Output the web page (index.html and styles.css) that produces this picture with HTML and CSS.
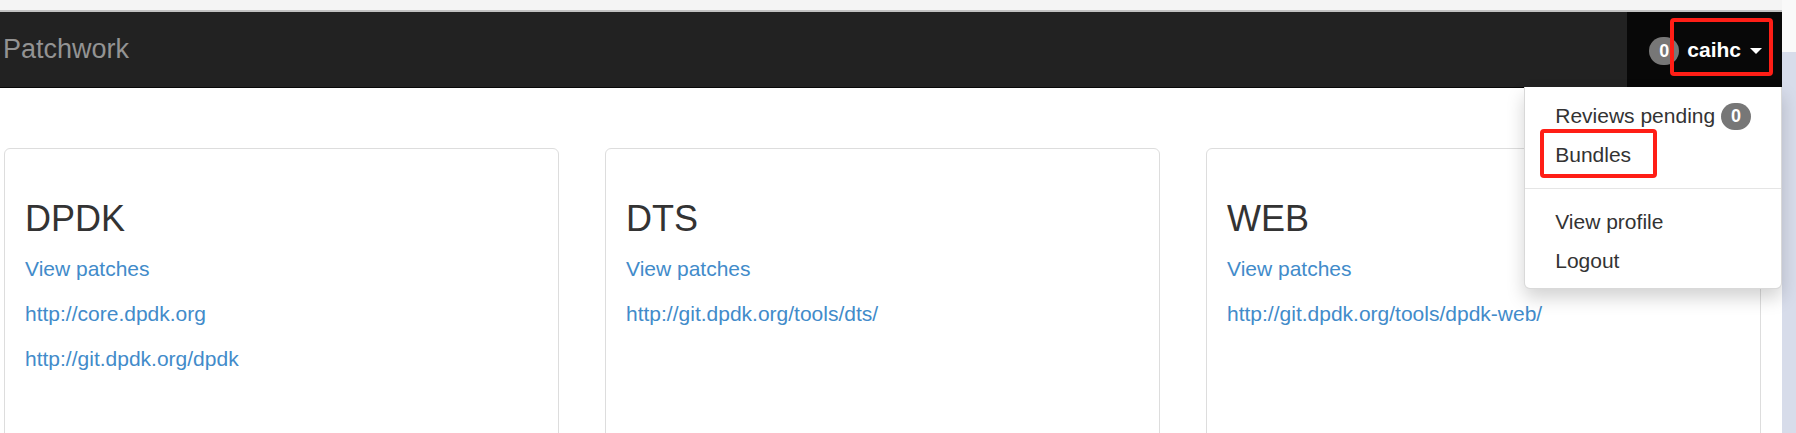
FILE: index.html
```html
<!DOCTYPE html>
<html lang="en">
<head>
    <meta charset="UTF-8">
    <meta name="viewport" content="width=device-width, initial-scale=1.0">
    <title>Patchwork</title>
    <link rel="stylesheet" href="styles.css">
</head>
<body>
    <div class="window">
        <div class="chrome-bar"></div>

        <nav class="navbar">
            <a class="navbar-brand" href="#">Patchwork</a>
            <div class="nav-user">
                <a class="user-toggle" href="#">
                    <span class="badge nav-badge">0</span>
                    <span class="username">caihc</span>
                    <span class="caret"></span>
                </a>
                <span class="highlight highlight-user"></span>

                <ul class="dropdown-menu">
                    <li><a href="#">Reviews pending <span class="badge">0</span></a></li>
                    <li><a href="#">Bundles</a></li>
                    <li class="divider"></li>
                    <li><a href="#">View profile</a></li>
                    <li><a href="#">Logout</a></li>
                    <span class="highlight highlight-bundles"></span>
                </ul>
            </div>
        </nav>

        <div class="projects">
            <div class="project">
                <h3>DPDK</h3>
                <p><a href="#">View patches</a></p>
                <p><a href="#">http://core.dpdk.org</a></p>
                <p><a href="#">http://git.dpdk.org/dpdk</a></p>
            </div>
            <div class="project">
                <h3>DTS</h3>
                <p><a href="#">View patches</a></p>
                <p><a href="#">http://git.dpdk.org/tools/dts/</a></p>
            </div>
            <div class="project">
                <h3>WEB</h3>
                <p><a href="#">View patches</a></p>
                <p><a href="#">http://git.dpdk.org/tools/dpdk-web/</a></p>
            </div>
        </div>
    </div>
    <div class="side-strip"></div>
</body>
</html>
```

FILE: styles.css
```css
* {
    margin: 0;
    padding: 0;
    box-sizing: border-box;
}

body {
    display: flex;
    height: 433px;
    overflow: hidden;
    background: white;
    color: #333;
    font-family: 'Liberation Sans', Arial, sans-serif;
    font-size: 21px;
    line-height: 30px;
}

a {
    color: #428bca;
    text-decoration: none;
}

.window {
    flex: 1;
    min-width: 0;
}

.side-strip {
    width: 14px;
    background: linear-gradient(#f9f9f9 0, #f9f9f9 52px, #d7dcea 52px);
}

.chrome-bar {
    height: 12px;
    background: #f4f4f4;
    border-bottom: 2px solid #c2c2c2;
}

/* Navbar */
.navbar {
    display: flex;
    justify-content: space-between;
    height: 76px;
    background: #222;
    border-bottom: 1px solid #080808;
}

.navbar-brand {
    padding: 22px 0 0 3px;
    color: #939393;
    font-size: 27px;
    line-height: 30px;
}

.nav-user {
    position: relative;
    background: #080808;
}

.user-toggle {
    display: flex;
    align-items: center;
    height: 75px;
    padding: 0 20px 0 22px;
    color: white;
}

.username {
    font-weight: bold;
    margin-left: 8px;
}

.caret {
    width: 0;
    height: 0;
    margin: 3px 0 0 9px;
    border-top: 6px solid white;
    border-left: 6px solid transparent;
    border-right: 6px solid transparent;
}

.badge {
    display: inline-block;
    padding: 4px 10px 5px;
    background: #777;
    color: white;
    font-size: 18px;
    font-weight: bold;
    line-height: 18px;
    border-radius: 14px;
    vertical-align: middle;
}

.nav-badge {
    padding: 5px 10px;
    margin-top: 3px;
}

/* Dropdown */
.dropdown-menu {
    position: absolute;
    top: 75px;
    right: 0;
    min-width: 240px;
    padding: 9px 0 8px;
    list-style: none;
    white-space: nowrap;
    background: white;
    border: 1px solid rgba(0, 0, 0, 0.15);
    border-top: none;
    border-radius: 0 0 6px 6px;
    box-shadow: 0 9px 18px rgba(0, 0, 0, 0.175);
    z-index: 10;
}

.dropdown-menu li a {
    display: block;
    padding: 4.5px 30px;
    color: #333;
}

.dropdown-menu .divider {
    height: 1px;
    margin: 13.5px 0;
    background: #e5e5e5;
}

/* Screenshot markers */
.highlight {
    position: absolute;
    border: 4px solid #ff1e16;
    border-radius: 4px;
    pointer-events: none;
}

.highlight-user {
    left: 43px;
    top: 6px;
    width: 103px;
    height: 58px;
}

.highlight-bundles {
    left: 15px;
    top: 42px;
    width: 117px;
    height: 49px;
}

/* Projects */
.projects {
    display: flex;
    gap: 46px;
    padding: 60px 0 0 4px;
}

.project {
    width: 555px;
    min-height: 400px;
    padding: 20px 20px 0;
    border: 1px solid #ddd;
    border-radius: 6px;
}

.project h3 {
    margin: 30px 0 15px;
    font-size: 36px;
    font-weight: normal;
    line-height: 39.6px;
}

.project p {
    margin-bottom: 15px;
}
```
